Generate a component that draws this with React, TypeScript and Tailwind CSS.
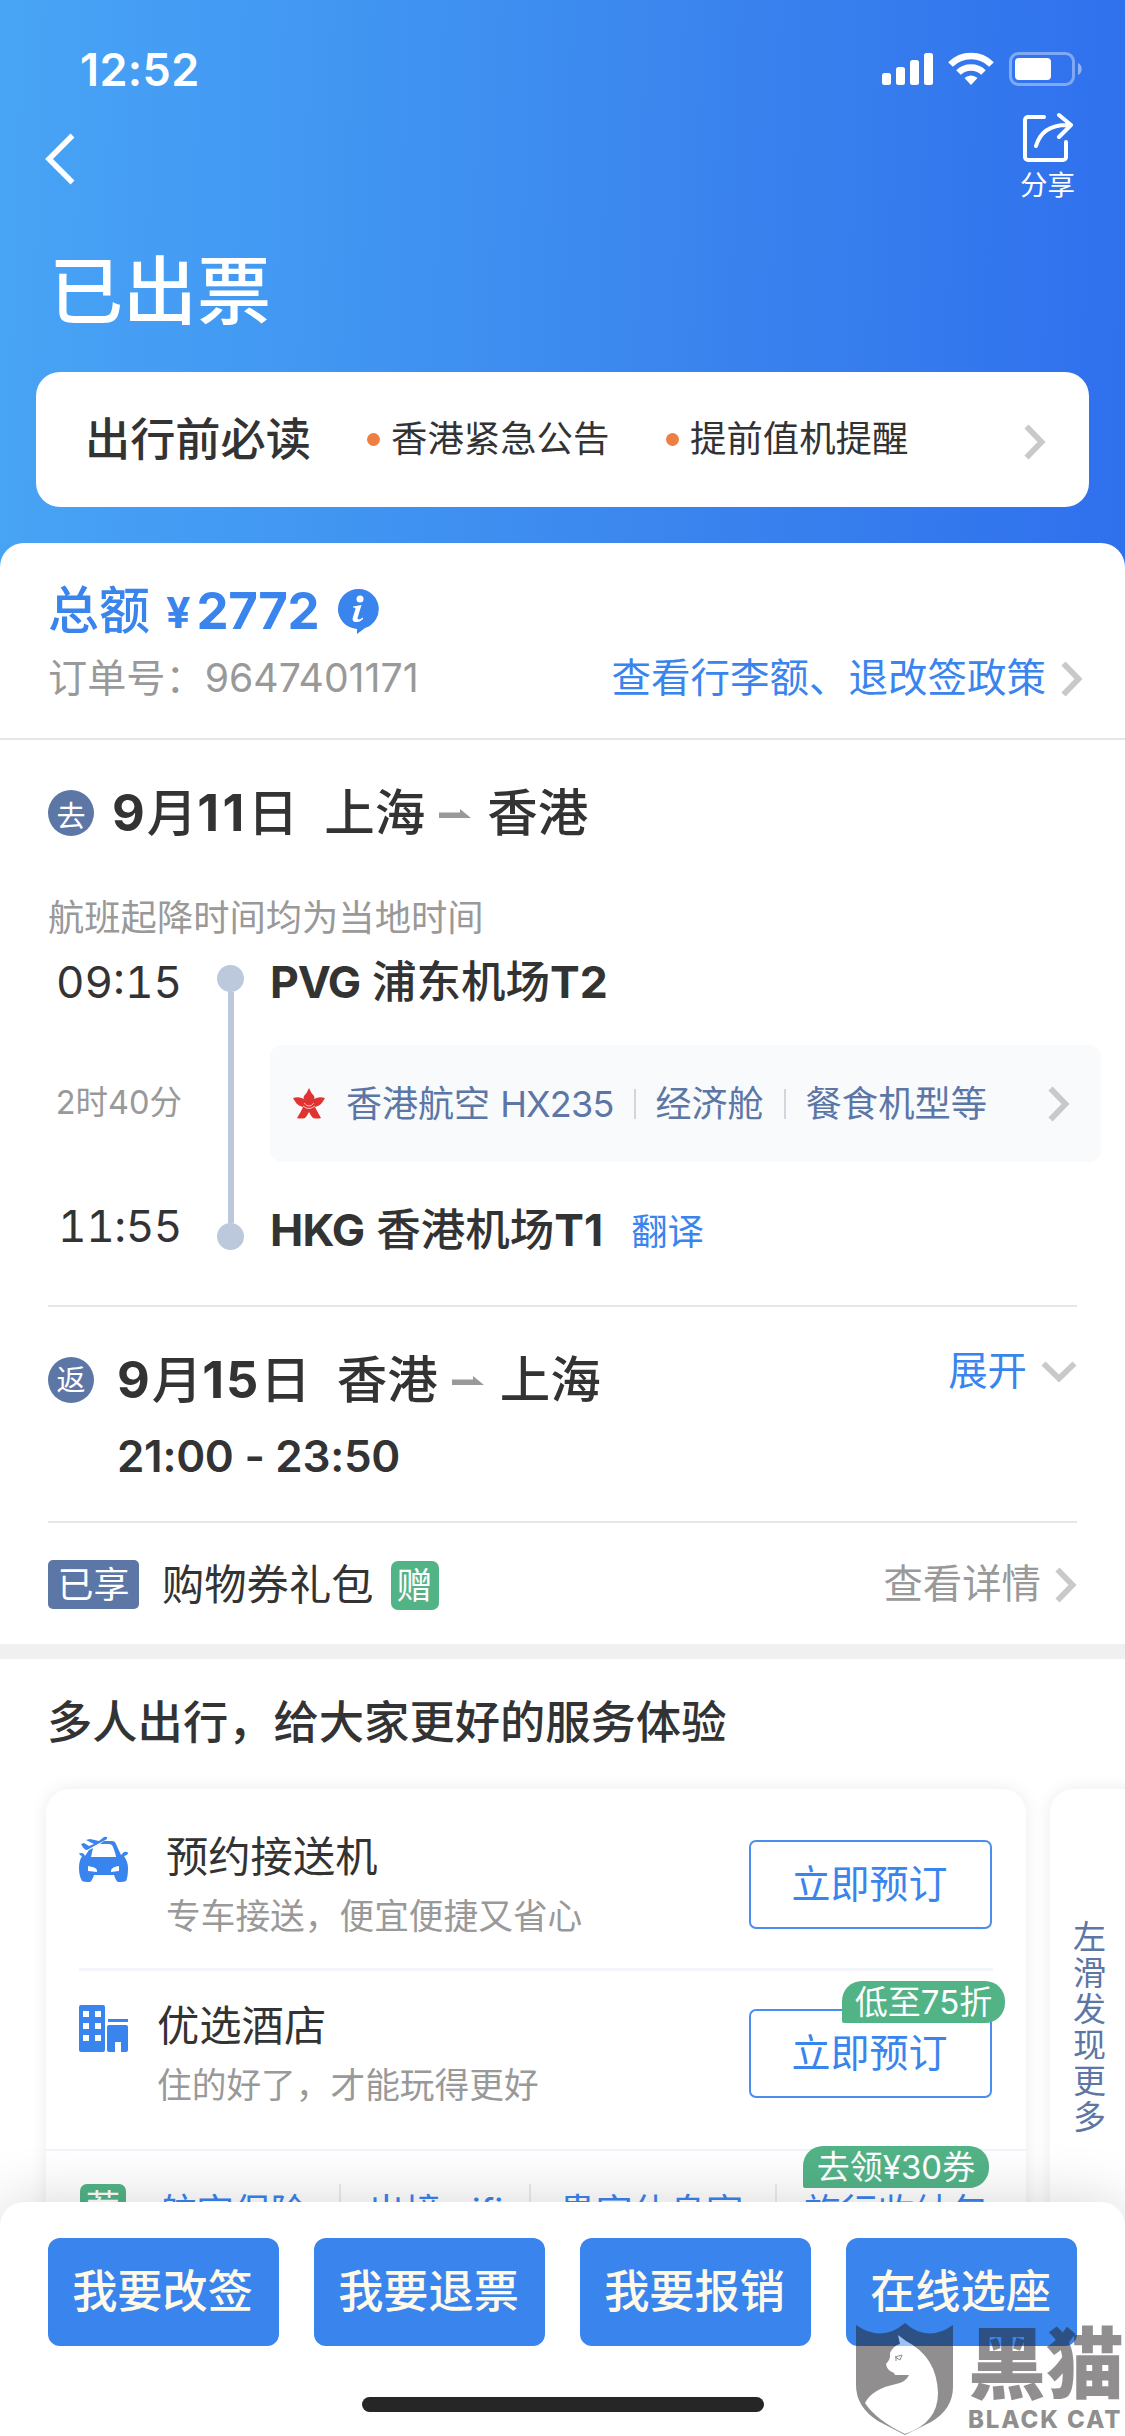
import { FC, ReactNode } from "react";

const Chevron: FC<{ className?: string }> = ({ className = "" }) => (
  <svg width="22" height="36" viewBox="0 0 22 36" fill="none" className={`shrink-0 ${className}`}>
    <path d="M2.500 2.500 17.500 18 2.500 33.500" stroke="#c9c9c9" strokeWidth="5.800" />
  </svg>
);

const Arrow: FC = () => (
  <svg width="32" height="9" viewBox="0 0 32 9" className="shrink-0">
    <path d="M0 3.500h21V0l11 9H0z" fill="#999" />
  </svg>
);

const StatusBar: FC = () => (
  <div className="flex h-[138px] items-center justify-between pl-[80px] pr-[42px]">
    <span className="text-[45px] font-semibold leading-none tracking-[0.4px]">12:52</span>
    <div className="flex items-center">
      <svg width="52" height="34" viewBox="0 0 52 34" fill="#fff">
        <rect x="0" y="21" width="9" height="12" rx="2.5" />
        <rect x="14" y="15" width="9" height="18" rx="2.5" />
        <rect x="28" y="8" width="9" height="25" rx="2.5" />
        <rect x="42" y="1" width="9" height="32" rx="2.5" />
      </svg>
      <svg width="46" height="34" viewBox="0 0 46 34" fill="none" className="ml-[14px]">
        <path d="M2.5 12.5a29 29 0 0 1 41 0" stroke="#fff" strokeWidth="6.5" />
        <path d="M10.5 20.5a18 18 0 0 1 25 0" stroke="#fff" strokeWidth="6.5" />
        <path d="M16.5 26a9.500 9.500 0 0 1 13 0L23 33z" fill="#fff" />
      </svg>
      <svg width="74" height="34" viewBox="0 0 74 34" className="ml-[15px]">
        <rect x="1.500" y="1.500" width="63" height="31" rx="8" fill="none" stroke="#fff" strokeOpacity=".38" strokeWidth="3" />
        <rect x="6" y="6" width="36" height="22" rx="4" fill="#fff" />
        <path d="M69 11c5 2 5 10 0 12z" fill="#fff" fillOpacity=".45" />
      </svg>
    </div>
  </div>
);

const NavBar: FC = () => (
  <div className="flex h-[90px] justify-between pl-[43px] pr-[50px]">
    <svg width="32" height="52" viewBox="0 0 32 52" fill="none" className="-mt-[5px]">
      <path d="M29.500 2.500 6 26l23.500 23.500" stroke="#fff" strokeWidth="5.500" />
    </svg>
    <div className="-mt-[27px] flex w-[55px] flex-col items-center">
      <svg width="50" height="52" viewBox="0 0 50 52" fill="none" stroke="#fff" strokeWidth="4" strokeLinecap="round" strokeLinejoin="round">
        <path d="M21 6H5a3 3 0 0 0-3 3v37a3 3 0 0 0 3 3h35a3 3 0 0 0 3-3V31" />
        <path d="M13 35C17 21 27 13 47 14M36 4l12 10-12 12" />
      </svg>
      <span className="mt-[8px] text-[27.500px] leading-[28px] whitespace-nowrap">分享</span>
    </div>
  </div>
);

const NoticeCard: FC = () => (
  <div className="mx-[36px] mt-[36px] flex h-[135px] items-center rounded-[24px] bg-white pl-[49px] pr-[43px] text-[#333]">
    <span className="w-[282px] text-[45.200px] font-medium">出行前必读</span>
    <i className="mr-[11px] h-[13px] w-[13px] rounded-full bg-[#ee7f44]" />
    <span className="w-[275px] text-[36.400px]">香港紧急公告</span>
    <i className="mr-[11px] h-[13px] w-[13px] rounded-full bg-[#ee7f44]" />
    <span className="text-[36.400px]">提前值机提醒</span>
    <Chevron className="mt-1 ml-auto" />
  </div>
);

const Summary: FC = () => (
  <div className="h-[197px] border-b-2 border-[#e5e6e8] pl-[48px] pr-[42px] pt-[42px]">
    <div className="flex h-[50px] items-center text-[51px] font-bold text-[#3a84ee]">
      <span className="text-[51px] font-medium">总额</span>
      <span className="ml-[16px] mt-1 text-[43px]">¥</span>
      <span className="ml-[6px] tracking-[-0.5px]">2772</span>
      <svg width="42" height="46" viewBox="0 0 42 46" className="ml-[19px] mt-[2px]">
        <path d="M21 1a20 20 0 0 1 6 39l-8 6v-5A20 20 0 0 1 21 1z" fill="#3a84ee" />
        <circle cx="22" cy="11" r="3.500" fill="#fff" />
        <path d="M15 18.500l8.500-1.500-4 13c0 2 2 2 5.500-.5v1.500c-3 3-5 3-7 3-3 0-4-2-3-5l2.500-8c0-1-1-1.500-2.500-1.500z" fill="#fff" />
      </svg>
    </div>
    <div className="mt-[18px] flex h-[50px] items-center text-[39.200px] text-[#999]">
      <span>订单号：9647401171</span>
      <span className="ml-auto mr-[15px] mt-[2px] text-[39.500px] text-[#3a84ee]">查看行李额、退改签政策</span>
      <Chevron className="mt-[2px]" />
    </div>
  </div>
);

const LegTitle: FC<{ tag: string; date: ReactNode; from: string; to: string; gap: string; pad: string }> = ({ tag, date, from, to, gap, pad }) => (
  <div className="flex h-[50px] items-center text-[50.500px] font-medium text-[#333]">
    <span className={`flex h-[46px] w-[46px] shrink-0 items-center justify-center rounded-full bg-[#5c76a6] text-[29px] font-normal text-white ${pad} ${gap}`}>
      {tag}
    </span>
    <span>{date}</span>
    <span className="ml-[26px] mr-[14px]">{from}</span>
    <Arrow />
    <span className="ml-[16px]">{to}</span>
  </div>
);

const Outbound: FC = () => (
  <div className="mx-[48px] h-[567px] border-b-2 border-[#e5e6e8] pt-[48px]">
    <LegTitle tag="去" date={<><b className="font-bold tracking-[2px]">9</b>月<b className="font-bold tracking-[3.5px]">11</b>日</>} from="上海" to="香港" gap="mr-[18px]" pad="pt-[6px]" />
    <p className="mt-[60px] h-[40px] text-[36.300px] leading-[40px] text-[#999]">航班起降时间均为当地时间</p>
    <div className="mt-[19px] -mr-[24px] flex h-[300px]">
      <div className="flex w-[134px] flex-col items-end text-[44px] leading-[50px] text-[#333]">
        <span className="tabular-nums">09:15</span>
        <span className="mt-[71px] text-[32.500px] text-[#999]">2时40分</span>
        <span className="mt-[73px] tracking-[-0.4px] tabular-nums">11:55</span>
      </div>
      <div className="ml-[35px] mt-[8px] flex h-[285px] w-[27px] flex-col items-center">
        <i className="h-[27px] w-[27px] rounded-full bg-[#bcc8dc]" />
        <i className="w-[6px] flex-1 bg-[#bcc8dc]" />
        <i className="h-[27px] w-[27px] rounded-full bg-[#bcc8dc]" />
      </div>
      <div className="ml-[26px] flex-1 text-[44.500px] font-medium leading-[50px] text-[#333]">
        <div className="whitespace-nowrap"><b className="font-bold tracking-[-1.2px]">PVG</b> 浦东机场<b className="font-bold">T2</b></div>
        <div className="mt-[38px] flex h-[117px] items-center rounded-[12px] bg-[#f9fafc] pl-[23px] pr-[31px] text-[36px] font-normal text-[#5c76a6]">
          <svg width="33" height="31" viewBox="0 0 33 31" className="mr-[20px]">
            <path d="M16 0q2 5 5 8 1 2 0 3 5-3 11-1-1 2-4 6-2 2-6 3 2 4 6 11-4 1-8 0-2-2-4-6-2 4-4 6-4 1-8 0 4-6 6-11-4-1-6-3-3-4-4-6 6-2 11 1-1-1 0-3 3-3 5-8z" fill="#df3431" />
            <path d="M11 15q5 6 10 0M10 18q6 5 12 0" fill="none" stroke="#f6bdbb" strokeWidth="1" />
          </svg>
          <span className="whitespace-nowrap">香港航空 <span className="tracking-[-0.8px]">HX235</span></span>
          <i className="mx-[20px] h-[30px] w-[2px] bg-[#d3d6dc]" />
          <span>经济舱</span>
          <i className="mx-[20px] h-[30px] w-[2px] bg-[#d3d6dc]" />
          <span className="text-[36.300px]">餐食机型等</span>
          <Chevron className="ml-auto" />
        </div>
        <div className="mt-[41px] flex items-center whitespace-nowrap">
          <span><b className="font-bold tracking-[-0.8px]">HKG</b> 香港机场<b className="font-bold">T1</b></span>
          <span className="ml-[28px] mt-1 text-[36.300px] font-normal text-[#3a84ee]">翻译</span>
        </div>
      </div>
    </div>
  </div>
);

const Inbound: FC = () => (
  <div className="mx-[48px] h-[216px] border-b-2 border-[#e5e6e8] pt-[48px]">
    <div className="flex">
      <LegTitle tag="返" date={<><b className="font-bold tracking-[2px]">9</b>月<b className="font-bold tracking-[2px]">15</b>日</>} from="香港" to="上海" gap="mr-[23px]" pad="pt-0" />
      <div className="-mt-[8px] ml-auto flex h-[50px] items-center text-[39.400px] text-[#3a84ee]">
        展开
        <svg width="36" height="22" viewBox="0 0 36 22" fill="none" className="ml-[14px]">
          <path d="M2.500 2.500 18 17.500 33.500 2.500" stroke="#c9c9c9" strokeWidth="5.800" />
        </svg>
      </div>
    </div>
    <p className="ml-[69px] mt-[26px] text-[44px] font-semibold leading-[50px] tracking-[-0.3px] text-[#333]">21:00 - 23:50</p>
  </div>
);

const GiftRow: FC = () => (
  <div className="flex h-[121px] items-center pl-[48px] pr-[48px] pt-[2px]">
    <span className="flex h-[49px] w-[91px] items-center justify-center rounded-[5px] bg-[#5c76a6] text-[36px] text-white">已享</span>
    <span className="ml-[23px] mt-[2px] text-[42.300px] text-[#333]">购物券礼包</span>
    <span className="ml-[17px] mt-[2px] flex h-[49px] w-[48px] items-center justify-center rounded-[7px] bg-[#52b387] text-[36px] text-white">赠</span>
    <span className="ml-auto mr-[14px] text-[39.400px] text-[#999]">查看详情</span>
    <Chevron />
  </div>
);

const CarIcon: FC = () => (
  <svg width="50" height="50" viewBox="0 0 50 50" fill="#3a84ee">
    <path d="M2 9l3-1 5 3 5-2-8-4 4-1 9 2 5-4q4-1 3 2L8 15q-3 0-6-6z" />
    <path fillRule="evenodd" d="M0 19q2-2 5 0l1 2 4-6 4-2-2 9h25q0-2-3-10-1-3-4-3h-9l4-3h8q3 0 4 3l5 11 3-3q3-1 4 1 0 2-4 3 4 6 4 12 0 9-2 13-2 1-8 1-2-1-4-7H15q-2 6-4 7-6 0-8-1-3-5-3-13 0-7 3-12-3-1-3-4zm9 12v5l9 1v-2q-1-3-9-4zm31 0q-8 1-8 5v1l8-1z" />
  </svg>
);

const HotelIcon: FC = () => (
  <svg width="50" height="50" viewBox="0 0 50 50" fill="#3a84ee">
    <path fillRule="evenodd" d="M2 1h22q2 0 2 2v43q0 2-2 2H2q-2 0-2-2V3q0-2 2-2zm2 6v6h6V7zm12 0v6h6V7zM4 19v6h6v-6zm12 0v6h6v-6zM4 31v6h6v-6zm12 0v6h6v-6z" />
    <path d="M29 15h20v3H29zM30 21h17q2 0 2 2v23q0 2-2 2h-5V38h-6v10h-6q-2 0-2-2V23q0-2 2-2z" />
  </svg>
);

const Tag: FC<{ children: ReactNode; className: string }> = ({ children, className }) => (
  <span className={`absolute flex h-[42px] items-center justify-center rounded-[20px] rounded-bl-[2px] bg-[#52b387] text-[33px] whitespace-nowrap text-white ${className}`}>
    {children}
  </span>
);

const Service: FC<{ icon: ReactNode; title: string; desc: string; gap: string; tag?: string }> = ({ icon, title, desc, gap, tag }) => (
  <div className="flex">
    {icon}
    <div className={`-mt-[4px] ${gap}`}>
      <h3 className="text-[42.300px] leading-[52px] text-[#333]">{title}</h3>
      <p className="mt-[11px] text-[34.700px] leading-[44px] text-[#999]">{desc}</p>
    </div>
    <div className="relative ml-auto mr-px mt-[5px] flex h-[89px] w-[243px] items-center justify-center rounded-[7px] border-2 border-[#4a8eef] pr-[2px] pb-[2px] text-[39px] text-[#3a84ee]">
      立即预订
      {tag && <Tag className="-right-[15px] -top-[30px] w-[163px]">{tag}</Tag>}
    </div>
  </div>
);

const Services: FC = () => (
  <section className="h-[559px] overflow-hidden border-t-[15px] border-[#f0f0f0]">
    <h2 className="ml-[47px] mt-[39px] text-[45.300px] font-medium leading-[50px] text-[#333]">多人出行，给大家更好的服务体验</h2>
    <div className="mt-[41px] flex gap-[24px] pl-[46px]">
      <div className="h-[500px] w-[980px] shrink-0 rounded-[24px] bg-white pt-[46px] shadow-[0_0_18px_rgba(0,0,0,0.08)]">
        <div className="mx-[33px] h-[136px] border-b-[3px] border-[#f3f5fb]">
          <Service icon={<CarIcon />} title="预约接送机" desc="专车接送，便宜便捷又省心" gap="ml-[37px]" />
        </div>
        <div className="mx-[33px] h-[178px] pt-[33px]">
          <Service icon={<HotelIcon />} title="优选酒店" desc="住的好了，才能玩得更好" gap="ml-[28px]" tag="低至75折" />
        </div>
        <div className="relative flex h-[100px] border-t-2 border-[#f0f3f9] pl-[34px] pt-[33px] text-[36.800px] leading-[50px] whitespace-nowrap text-[#3a84ee]">
          <span className="flex h-[46px] w-[46px] items-center justify-center rounded-[7px] bg-[#52b387] text-[34px] text-white">荐</span>
          <span className="ml-[34px] w-[179px] pt-[3px]">航空保险</span>
          <i className="h-[40px] w-[2px] bg-[#e8ebf2]" />
          <span className="w-[188px] pl-[27px] pt-[3px]">出境wifi</span>
          <i className="h-[40px] w-[2px] bg-[#e8ebf2]" />
          <span className="w-[244px] pl-[28px] pt-[3px]">贵宾休息室</span>
          <i className="h-[40px] w-[2px] bg-[#e8ebf2]" />
          <span className="pl-[27px] pt-[3px]">旅行收纳包</span>
          <Tag className="right-[37px] -top-[5px] w-[186px]">去领¥30券</Tag>
        </div>
      </div>
      <div className="flex h-[500px] w-[200px] shrink-0 rounded-[24px] bg-white pl-[23px] pt-[130px] shadow-[0_0_18px_rgba(0,0,0,0.08)]">
        <p className="w-[34px] text-[33px] leading-[36px] break-all text-[#5c76a6]">左滑发现更多</p>
      </div>
    </div>
  </section>
);

const Watermark: FC = () => (
  <div className="absolute bottom-0 right-0 flex h-[115px] w-[269px] opacity-50">
    <svg width="98" height="116" viewBox="0 0 98 116">
      <path d="M0 4q26 18 49-2 23 20 48 2v62q0 22-22 35L49 114 22 100Q0 86 0 64z" fill="#231f20" />
      <path d="M42 14l8 6q31 16 32 52 0 30-33 41Q20 99 9 82q7-14 31-19 10-2 13-9H39q-1-3-3-3-5-2-6-8 5-5 4-11 3-7 10-9z" fill="#fff" />
      <path d="M39 36l7-2-2 5zM40 36v4" stroke="#231f20" fill="none" />
    </svg>
    <div className="ml-[14px] flex flex-col text-[#231f20]">
      <span className="h-[84px] text-[78px] font-black leading-[88px] whitespace-nowrap">黑猫</span>
      <span className="mt-[2px] text-[24px] font-extrabold leading-[26px] tracking-[1.9px] whitespace-nowrap">BLACK CAT</span>
    </div>
  </div>
);

const actions = ["我要改签", "我要退票", "我要报销", "在线选座"];

const Footer: FC = () => (
  <footer className="relative h-[234px] rounded-t-[24px] bg-white pt-[36px] shadow-[0_0_60px_rgba(0,0,0,0.16)]">
    <div className="mx-[48px] grid grid-cols-4 gap-[35px]">
      {actions.map((label) => (
        <button key={label} className="h-[108px] rounded-[12px] bg-[#3a84ed] pr-[2px] text-[45.200px] font-medium whitespace-nowrap text-[#fff9ea]">
          {label}
        </button>
      ))}
    </div>
    <div className="ml-[362px] mt-[51px] h-[15px] w-[402px] rounded-full bg-[#262626]" />
    <Watermark />
  </footer>
);

export default function App() {
  return (
    <div className="h-[2436px] w-[1125px] overflow-hidden bg-white font-['Inter','Noto_Sans_CJK_SC',sans-serif] leading-none">
      <header className="h-[570px] bg-[linear-gradient(92deg,#48a4f5_0%,#4196f2_30%,#3a84ee_62%,#2f70ed_100%)] text-white">
        <StatusBar />
        <NavBar />
        <h1 className="ml-[49px] mt-[21px] h-[87px] text-[74px] font-medium leading-[84px]">已出票</h1>
        <NoticeCard />
      </header>
      <main className="relative -mt-[27px] rounded-t-[24px] bg-white">
        <Summary />
        <Outbound />
        <Inbound />
        <GiftRow />
        <Services />
      </main>
      <div className="-mt-px">
        <Footer />
      </div>
    </div>
  );
}
